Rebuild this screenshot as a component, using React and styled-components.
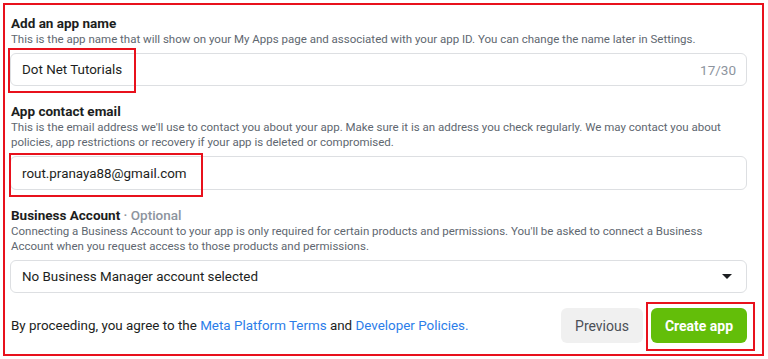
import React from 'react';
import styled, { createGlobalStyle } from 'styled-components';

const GlobalStyle = createGlobalStyle`
  html, body {
    margin: 0;
    padding: 0;
    background: #fff;
    font-family: Roboto, "Liberation Sans", Arial, sans-serif;
    color: #1c1e21;
  }
  * { box-sizing: border-box; }
`;

const RED = '#e8111c';

const Frame = styled.div`
  margin: 3px 0 0 3px;
  width: 761px;
  height: 353px;
  border: 2px solid ${RED};
  padding: 9px 15px 12px 5px;
  display: flex;
  flex-direction: column;
`;

const Section = styled.section`
  display: flex;
  flex-direction: column;
  margin-bottom: ${p => p.$last ? 15 : 16}px;
`;

const Title = styled.div`
  font-size: 13.5px;
  line-height: 18px;
  font-weight: 700;
  color: #1c1e21;
  padding-left: 1px;
`;

const Optional = styled.span`
  font-weight: 500;
  color: #8d949e;
`;

const Desc = styled.p`
  margin: 0 0 6px;
  font-size: 11.5px;
  line-height: 15px;
  color: #606770;
  padding-left: 1px;
`;

const FieldWrap = styled.div`
  position: relative;
`;

const Field = styled.div`
  height: ${p => p.$h || 33}px;
  border: 1px solid #dddfe2;
  border-radius: 6px;
  padding: 0 ${p => p.$pr || 10}px 0 11px;
  display: flex;
  align-items: center;
  justify-content: space-between;
  font-size: 13.4px;
  color: #1c1e21;
  background: #fff;
`;

const Counter = styled.span`
  color: #8d949e;
  font-size: 13.5px;
`;

const Caret = styled.span`
  width: 0;
  height: 0;
  border-left: 5px solid transparent;
  border-right: 5px solid transparent;
  border-top: 5px solid #1c1e21;
`;

// annotation rectangles drawn over the screenshot
const Mark = styled.span`
  position: absolute;
  left: ${p => p.$l}px;
  top: ${p => p.$t}px;
  width: ${p => p.$w}px;
  height: ${p => p.$h}px;
  border: 2px solid ${RED};
  pointer-events: none;
`;

const Footer = styled.div`
  display: flex;
  align-items: center;
  justify-content: space-between;
  padding-left: 1px;
`;

const Terms = styled.div`
  font-size: 13.4px;
  color: #1c1e21;
`;

const Link = styled.a`
  color: #2b7de9;
  text-decoration: none;
`;

const Actions = styled.div`
  display: flex;
  gap: 8px;
`;

const ButtonWrap = styled.div`
  position: relative;
`;

const Button = styled.button`
  height: 35px;
  width: ${p => p.$w}px;
  border: none;
  border-radius: 6px;
  font-family: inherit;
  font-size: 14px;
  font-weight: ${p => p.$primary ? 700 : 400};
  color: ${p => p.$primary ? '#fff' : '#4b4f56'};
  background: ${p => p.$primary ? '#63be09' : '#f0f0f0'};
  padding: 0;
`;

export default function App() {
  return (
    <>
      <GlobalStyle />
      <Frame>
        <Section>
          <Title>Add an app name</Title>
          <Desc>
            This is the app name that will show on your My Apps page and associated with your app ID. You can change the name later in Settings.
          </Desc>
          <FieldWrap>
            <Field $h={33}>
              <span>Dot Net Tutorials</span>
              <Counter>17/30</Counter>
            </Field>
            <Mark $l={-2} $t={-5} $w={128} $h={45} />
          </FieldWrap>
        </Section>

        <Section>
          <Title>App contact email</Title>
          <Desc>
            This is the email address we'll use to contact you about your app. Make sure it is an address you check regularly. We may contact you about policies, app restrictions or recovery if your app is deleted or compromised.
          </Desc>
          <FieldWrap>
            <Field $h={34}>
              <span>rout.pranaya88@gmail.com</span>
            </Field>
            <Mark $l={-1} $t={-3} $w={194} $h={44} />
          </FieldWrap>
        </Section>

        <Section $last>
          <Title>
            Business Account <Optional>· Optional</Optional>
          </Title>
          <Desc>
            Connecting a Business Account to your app is only required for certain products and permissions. You'll be asked to connect a Business Account when you request access to those products and permissions.
          </Desc>
          <Field $h={33} $pr={14}>
            <span>No Business Manager account selected</span>
            <Caret />
          </Field>
        </Section>

        <Footer>
          <Terms>
            By proceeding, you agree to the <Link href="#">Meta Platform Terms</Link> and{' '}
            <Link href="#">Developer Policies.</Link>
          </Terms>
          <Actions>
            <Button $w={82}>Previous</Button>
            <ButtonWrap>
              <Button $w={96} $primary>Create app</Button>
              <Mark $l={-5} $t={-6} $w={109} $h={49} />
            </ButtonWrap>
          </Actions>
        </Footer>
      </Frame>
    </>
  );
}
